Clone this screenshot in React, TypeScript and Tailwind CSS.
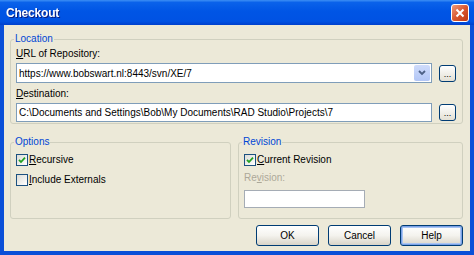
import React from 'react';

const font = "font-['Liberation_Sans',Arial,sans-serif]";

function CheckBox({ checked }: { checked?: boolean }) {
  return (
    <span className="w-[12px] h-[12px] shrink-0 border border-[#1c5180] bg-linear-to-br from-[#dcdcd7] to-white flex items-center justify-center">
      {checked && (
        <svg width="8" height="8" viewBox="0 0 8 8">
          <path d="M1 3.8 L3 6 L7 1.6" stroke="#21a121" strokeWidth="1.8" fill="none" />
        </svg>
      )}
    </span>
  );
}

function DotsButton() {
  return (
    <button className="w-[17px] h-[17px] shrink-0 rounded-[3px] border border-[#003c74] bg-linear-to-b from-white to-[#e3e0d4] flex items-end justify-center pb-[2px] text-[9px] leading-none text-black">
      ...
    </button>
  );
}

function XpButton({ label, focused }: { label: string; focused?: boolean }) {
  return (
    <button
      className={`w-[63px] h-[21px] rounded-[3px] border border-[#003c74] bg-linear-to-b from-white via-[#f4f3ee] to-[#d9d4c8] text-[10px] text-black ${
        focused ? 'shadow-[inset_0_0_0_1px_#7ba2e7,inset_0_0_0_2px_#a8c4f2]' : ''
      }`}
    >
      {label}
    </button>
  );
}

function Group({ title, className, children }: { title: string; className?: string; children: React.ReactNode }) {
  return (
    <fieldset className={`border border-[#d0d0bf] rounded-[3px] px-[5px] ${className ?? ''}`}>
      <legend className="px-[1px] -ml-[2px] text-[#0046d5] leading-[12px]">{title}</legend>
      {children}
    </fieldset>
  );
}

export default function App() {
  return (
    <div className={`w-[474px] h-[255px] flex flex-col text-[10px] text-black ${font}`}>
      {/* title bar */}
      <div className="h-[25px] shrink-0 flex items-center justify-between pl-[6px] pr-[5px] bg-[linear-gradient(to_bottom,#3d8ff5_0%,#0a62ea_10%,#0055e5_45%,#0052e3_85%,#0040cc_100%)]">
        <span className="text-white font-bold text-[12px] tracking-[-0.2px] drop-shadow-[1px_1px_0_#0a1e80]">
          Checkout
        </span>
        <div className="w-[18px] h-[18px] rounded-[3px] border border-white bg-linear-to-br from-[#ef9a7a] via-[#d8572f] to-[#c0380e] flex items-center justify-center">
          <svg width="10" height="10" viewBox="0 0 10 10">
            <path d="M1.5 1.5 L8.5 8.5 M8.5 1.5 L1.5 8.5" stroke="white" strokeWidth="2" />
          </svg>
        </div>
      </div>

      {/* body */}
      <div className="flex-1 flex flex-col border-x-[4px] border-b-[4px] border-[#0a4fd8] bg-[#ece9d8] pt-[8px] pl-[6px] pr-[7px]">
        <Group title="Location" className="pb-[1px] pr-[6px]">
          <div className="mt-[3px] leading-[12px]">
            <u>U</u>RL of Repository:
          </div>
          <div className="mt-[3px] flex items-center gap-[7px]">
            <div className="flex-1 h-[20px] border border-[#7f9db9] bg-white flex items-center">
              <span className="flex-1 pl-[2px]">https://www.bobswart.nl:8443/svn/XE/7</span>
              <span className="w-[16px] h-[16px] mr-[1px] rounded-[2px] bg-linear-to-b from-[#cfdcfb] to-[#b2c6f6] flex items-center justify-center">
                <svg width="8" height="6" viewBox="0 0 8 6">
                  <path d="M1 1 L4 4 L7 1" stroke="#4d6185" strokeWidth="1.8" fill="none" />
                </svg>
              </span>
            </div>
            <DotsButton />
          </div>
          <div className="mt-[5px] leading-[12px]">
            <u>D</u>estination:
          </div>
          <div className="mt-[3px] flex items-center gap-[7px]">
            <div className="flex-1 h-[19px] border border-[#7f9db9] bg-white flex items-center pl-[2px]">
              C:\Documents and Settings\Bob\My Documents\RAD Studio\Projects\7
            </div>
            <DotsButton />
          </div>
        </Group>

        <div className="mt-[12px] flex gap-[7px]">
          <Group title="Options" className="w-[221px] h-[83px]">
            <div className="mt-[6px] flex items-center gap-[1px] leading-[12px]">
              <CheckBox checked />
              <span>
                <u>R</u>ecursive
              </span>
            </div>
            <div className="mt-[8px] flex items-center gap-[1px] leading-[12px]">
              <CheckBox />
              <span>
                <u>I</u>nclude Externals
              </span>
            </div>
          </Group>
          <Group title="Revision" className="flex-1 h-[83px]">
            <div className="mt-[6px] flex items-center gap-[1px] leading-[12px]">
              <CheckBox checked />
              <span>
                <u>C</u>urrent Revision
              </span>
            </div>
            <div className="mt-[6px] text-[#aca899] leading-[12px]">
              Re<u>v</u>ision:
            </div>
            <div className="mt-[6px] w-[121px] h-[18px] border border-[#a5acb5] bg-white" />
          </Group>
        </div>

        <div className="mt-[6px] flex justify-end gap-[9px]">
          <XpButton label="OK" />
          <XpButton label="Cancel" />
          <XpButton label="Help" focused />
        </div>
      </div>
    </div>
  );
}
